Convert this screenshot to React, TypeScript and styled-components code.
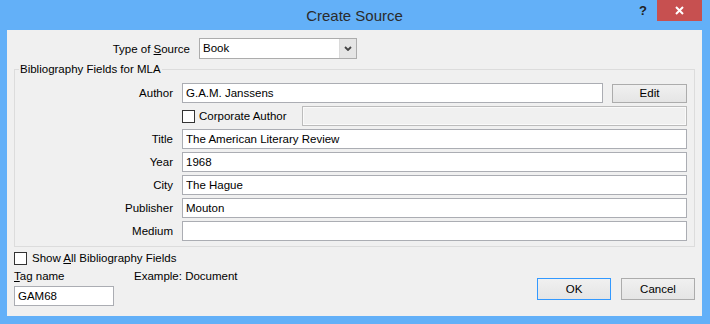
import { Fragment } from "react";
import styled, { createGlobalStyle } from "styled-components";

const GlobalStyle = createGlobalStyle`
  html, body {
    margin: 0;
    padding: 0;
    background: #63b0f8;
  }
  body {
    font-family: "Liberation Sans", Arial, sans-serif;
    font-size: 11.5px;
    color: #000;
  }
  * {
    box-sizing: border-box;
  }
`;

const Window = styled.div`
  width: 710px;
  height: 324px;
  display: flex;
  flex-direction: column;
  padding: 0 8px 8px 7px;
  background: #63b0f8;
`;

const TitleBar = styled.div`
  height: 30px;
  display: grid;
  grid-template-columns: 1fr auto 1fr;
  align-items: start;
`;

const Title = styled.div`
  grid-column: 2;
  font-size: 15px;
  line-height: 31px;
  color: #2b2b2b;
`;

const Controls = styled.div`
  grid-column: 3;
  display: flex;
  justify-content: flex-end;
  align-items: flex-start;
  gap: 10px;
`;

const Help = styled.span`
  font-weight: bold;
  font-size: 13px;
  line-height: 22px;
  color: #222;
`;

const CloseBtn = styled.div`
  width: 45px;
  height: 21px;
  background: #c75050;
  display: flex;
  align-items: center;
  justify-content: center;
`;

const Body = styled.div`
  flex: 1;
  background: #f0f0f0;
  padding: 8px 7px 10px 7px;
  display: flex;
  flex-direction: column;
`;

const TypeRow = styled.div`
  display: grid;
  grid-template-columns: 176px 158px;
  column-gap: 9px;
  align-items: center;
`;

const Label = styled.span`
  text-align: right;
  white-space: nowrap;
`;

const Select = styled.div`
  height: 21px;
  display: flex;
  align-items: stretch;
  border: 1px solid #acacac;
  background: #fff;
`;

const SelectValue = styled.span`
  flex: 1;
  padding: 0 3px;
  line-height: 19px;
`;

const SelectArrow = styled.span`
  width: 17px;
  background: #e5e5e5;
  border-left: 1px solid #dadada;
  display: flex;
  align-items: center;
  justify-content: center;
`;

const Group = styled.fieldset`
  margin: 3px 0 0 0;
  padding: 6px 7px 5px 0;
  border: 1px solid #dcdcdc;
  min-width: 0;
`;

const Legend = styled.legend`
  margin-left: 4px;
  padding: 0 1px;
  line-height: 15px;
`;

const FieldGrid = styled.div`
  display: grid;
  grid-template-columns: 158px 1fr;
  column-gap: 9px;
  row-gap: 3px;
  align-items: center;
`;

const Input = styled.input<{ $width?: number }>`
  height: 20px;
  width: ${(p) => (p.$width ? `${p.$width}px` : "100%")};
  border: 1px solid #abadb3;
  background: #fff;
  padding: 0 3px;
  font: inherit;
  color: #000;
  outline: none;
  min-width: 0;
`;

const DisabledBox = styled.div`
  width: 385px;
  height: 20px;
  margin-left: auto;
  border: 1px solid #bcbcbc;
  background: #f0f0f0;
  box-shadow: inset 0 0 0 1px #fafafa;
`;

const InlineRow = styled.div`
  display: flex;
  align-items: center;
  gap: 9px;
`;

const Button = styled.button<{ $primary?: boolean; $h?: number; $w?: number }>`
  width: ${(p) => p.$w ?? 74}px;
  height: ${(p) => p.$h ?? 22}px;
  border: 1px solid ${(p) => (p.$primary ? "#3399ff" : "#acacac")};
  background: linear-gradient(#f0f0f0, #e5e5e5);
  font: inherit;
  color: #000;
  padding: 0;
  flex: none;
`;

const Check = styled.span`
  width: 13px;
  height: 13px;
  border: 1px solid #333;
  background: #fff;
  flex: none;
`;

const CheckRow = styled.label`
  display: flex;
  align-items: center;
  gap: 4px;
  line-height: 15px;
  white-space: nowrap;
`;

const Footer = styled.div`
  margin-top: 4px;
  display: flex;
  justify-content: space-between;
  align-items: flex-end;
`;

const LeftCol = styled.div`
  display: flex;
  flex-direction: column;
`;

const TagHeader = styled.div`
  margin-top: 3px;
  display: grid;
  grid-template-columns: 120px auto;
  line-height: 15px;
`;

const TagInputWrap = styled.div`
  margin-top: 2px;
`;

const ButtonBar = styled.div`
  display: flex;
  gap: 10px;
  margin-bottom: 6px;
`;

export default function App() {
  const fields: [string, string][] = [
    ["Title", "The American Literary Review"],
    ["Year", "1968"],
    ["City", "The Hague"],
    ["Publisher", "Mouton"],
    ["Medium", ""],
  ];

  return (
    <>
      <GlobalStyle />
      <Window>
        <TitleBar>
          <Title>Create Source</Title>
          <Controls>
            <Help>?</Help>
            <CloseBtn>
              <svg width="9" height="9" viewBox="0 0 9 9">
                <path d="M1 1 L8 8 M8 1 L1 8" stroke="#fff" strokeWidth="2" />
              </svg>
            </CloseBtn>
          </Controls>
        </TitleBar>
        <Body>
          <TypeRow>
            <Label>
              Type of <u>S</u>ource
            </Label>
            <Select>
              <SelectValue>Book</SelectValue>
              <SelectArrow>
                <svg width="8" height="5" viewBox="0 0 8 5">
                  <path d="M1 1 L4 4 L7 1" stroke="#444" strokeWidth="1.8" fill="none" />
                </svg>
              </SelectArrow>
            </Select>
          </TypeRow>

          <Group>
            <Legend>Bibliography Fields for MLA</Legend>
            <FieldGrid>
              <Label>Author</Label>
              <InlineRow>
                <Input defaultValue="G.A.M. Janssens" />
                <Button $h={19} $w={75}>
                  Edit
                </Button>
              </InlineRow>

              <span />
              <InlineRow>
                <CheckRow>
                  <Check />
                  Corporate Author
                </CheckRow>
                <DisabledBox />
              </InlineRow>

              {fields.map(([label, value]) => (
                <Fragment key={label}>
                  <Label>{label}</Label>
                  <Input defaultValue={value} />
                </Fragment>
              ))}
            </FieldGrid>
          </Group>

          <Footer>
            <LeftCol>
              <CheckRow>
                <Check />
                <span style={{ marginLeft: 1 }}>
                  Show <u>A</u>ll Bibliography Fields
                </span>
              </CheckRow>
              <TagHeader>
                <span>
                  <u>T</u>ag name
                </span>
                <span>Example: Document</span>
              </TagHeader>
              <TagInputWrap>
                <Input $width={100} defaultValue="GAM68" />
              </TagInputWrap>
            </LeftCol>
            <ButtonBar>
              <Button $primary>OK</Button>
              <Button>Cancel</Button>
            </ButtonBar>
          </Footer>
        </Body>
      </Window>
    </>
  );
}
